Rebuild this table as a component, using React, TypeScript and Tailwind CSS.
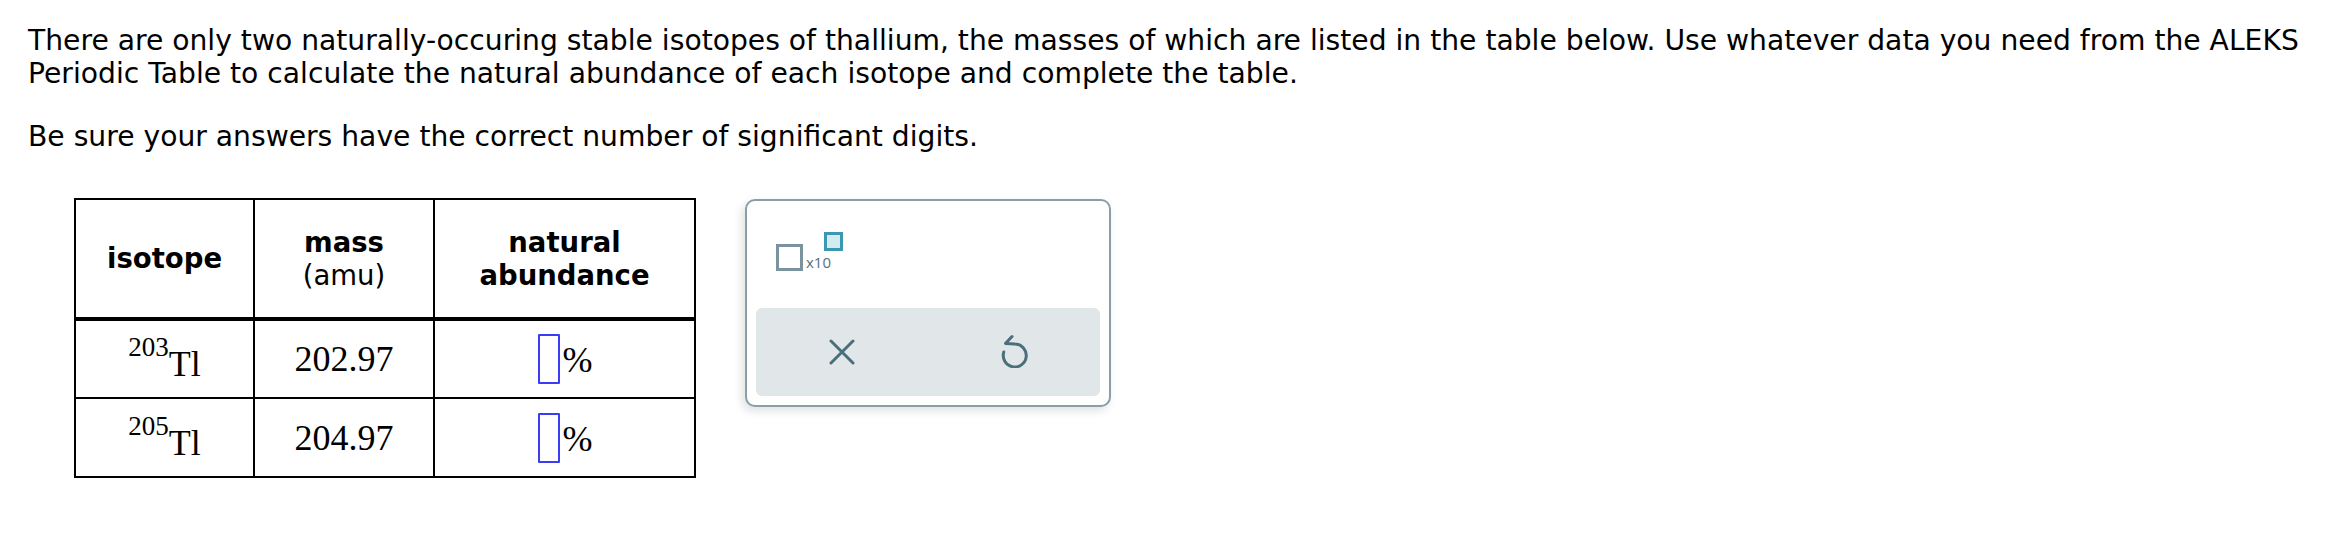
import React from "react";

interface Isotope {
  mass: string;
  label: string;
  symbol: string;
}

const ISOTOPES: Isotope[] = [
  { label: "203", symbol: "Tl", mass: "202.97" },
  { label: "205", symbol: "Tl", mass: "204.97" },
];

function CloseIcon() {
  return (
    <svg width="26" height="26" viewBox="0 0 26 26" fill="none">
      <path d="M2 2 L24 24 M24 2 L2 24" stroke="#4b6e7b" strokeWidth="3" strokeLinecap="round" />
    </svg>
  );
}

function UndoIcon() {
  return (
    <svg width="32" height="34" viewBox="0 0 32 34" fill="none">
      <path
        d="M14 2.5 L7.5 9.5 L17 10 A11.5 11.5 0 1 1 5.8 18"
        stroke="#4b6e7b"
        strokeWidth="3"
        strokeLinecap="round"
        strokeLinejoin="round"
      />
    </svg>
  );
}

export default function App() {
  return (
    <div className="min-h-screen bg-white pl-[28px] pt-[24px] font-['DejaVu_Sans',Verdana,sans-serif] text-[28.2px] leading-[33px] text-black">
      <p>
        There are only two naturally-occuring stable isotopes of thallium, the masses of which are listed in the table
        below. Use whatever data you need from the ALEKS
        <br />
        Periodic Table to calculate the natural abundance of each isotope and complete the table.
      </p>
      <p className="mt-[30px]">Be sure your answers have the correct number of significant digits.</p>

      <div className="mt-[45px] ml-[46px] flex items-start gap-[49px]">
        {/* data table */}
        <div className="w-[622px] border-2 border-black">
          <div className="flex h-[121px] border-b-4 border-black text-[27.5px] font-bold text-center">
            <div className="flex w-[179px] items-center justify-center border-r-2 border-black">isotope</div>
            <div className="flex w-[180px] flex-col items-center justify-center border-r-2 border-black">
              <span>mass</span>
              <span className="font-normal">(amu)</span>
            </div>
            <div className="flex flex-1 flex-col items-center justify-center">
              <span>natural</span>
              <span>abundance</span>
            </div>
          </div>

          {ISOTOPES.map((iso, i) => (
            <div
              key={iso.label}
              className={
                i === 0
                  ? "flex h-[78px] border-b-2 border-black font-['Liberation_Serif','Times_New_Roman',serif] text-[36px]"
                  : "flex h-[77px] font-['Liberation_Serif','Times_New_Roman',serif] text-[36px]"
              }
            >
              <div className="flex w-[179px] items-center justify-center border-r-2 border-black">
                <span className="leading-normal">
                  <span className="align-[20px] text-[27px]">{iso.label}</span>
                  {iso.symbol}
                </span>
              </div>
              <div className="flex w-[180px] items-center justify-center border-r-2 border-black leading-normal">
                {iso.mass}
              </div>
              <div className="flex flex-1 items-center justify-center">
                <div className="flex items-start pl-[1px]">
                  <div className="h-[50px] w-[22px] rounded-[1px] border-2 border-[#3c3cf5] bg-white" />
                  <span className="ml-[3px] mt-[8px] leading-[36px]">%</span>
                </div>
              </div>
            </div>
          ))}
        </div>

        {/* answer tools panel */}
        <div className="mt-[1px] flex h-[208px] w-[366px] flex-col rounded-[10px] border-2 border-[#8a9ea7] bg-white shadow-[-3px_4px_10px_rgba(0,0,0,0.12)]">
          <div className="flex-1 pl-[29px] pt-[31px]">
            <div className="flex items-start">
              <div className="mt-[12px] h-[27px] w-[27px] border-[3px] border-[#7b939d]" />
              <span className="ml-[3px] mt-[23px] font-['Open_Sans',sans-serif] text-[15px] leading-[15px] text-[#56707b]">
                x10
              </span>
              <div className="-ml-[7px] h-[19px] w-[19px] border-[3px] border-[#3e97b0] bg-[#d3ecf3]" />
            </div>
          </div>
          <div className="mx-[9px] mb-[9px] grid h-[88px] grid-cols-2 items-center rounded-[6px] bg-[#e1e6e9]">
            <div className="flex justify-center">
              <CloseIcon />
            </div>
            <div className="flex justify-center pb-[2px]">
              <UndoIcon />
            </div>
          </div>
        </div>
      </div>
    </div>
  );
}
